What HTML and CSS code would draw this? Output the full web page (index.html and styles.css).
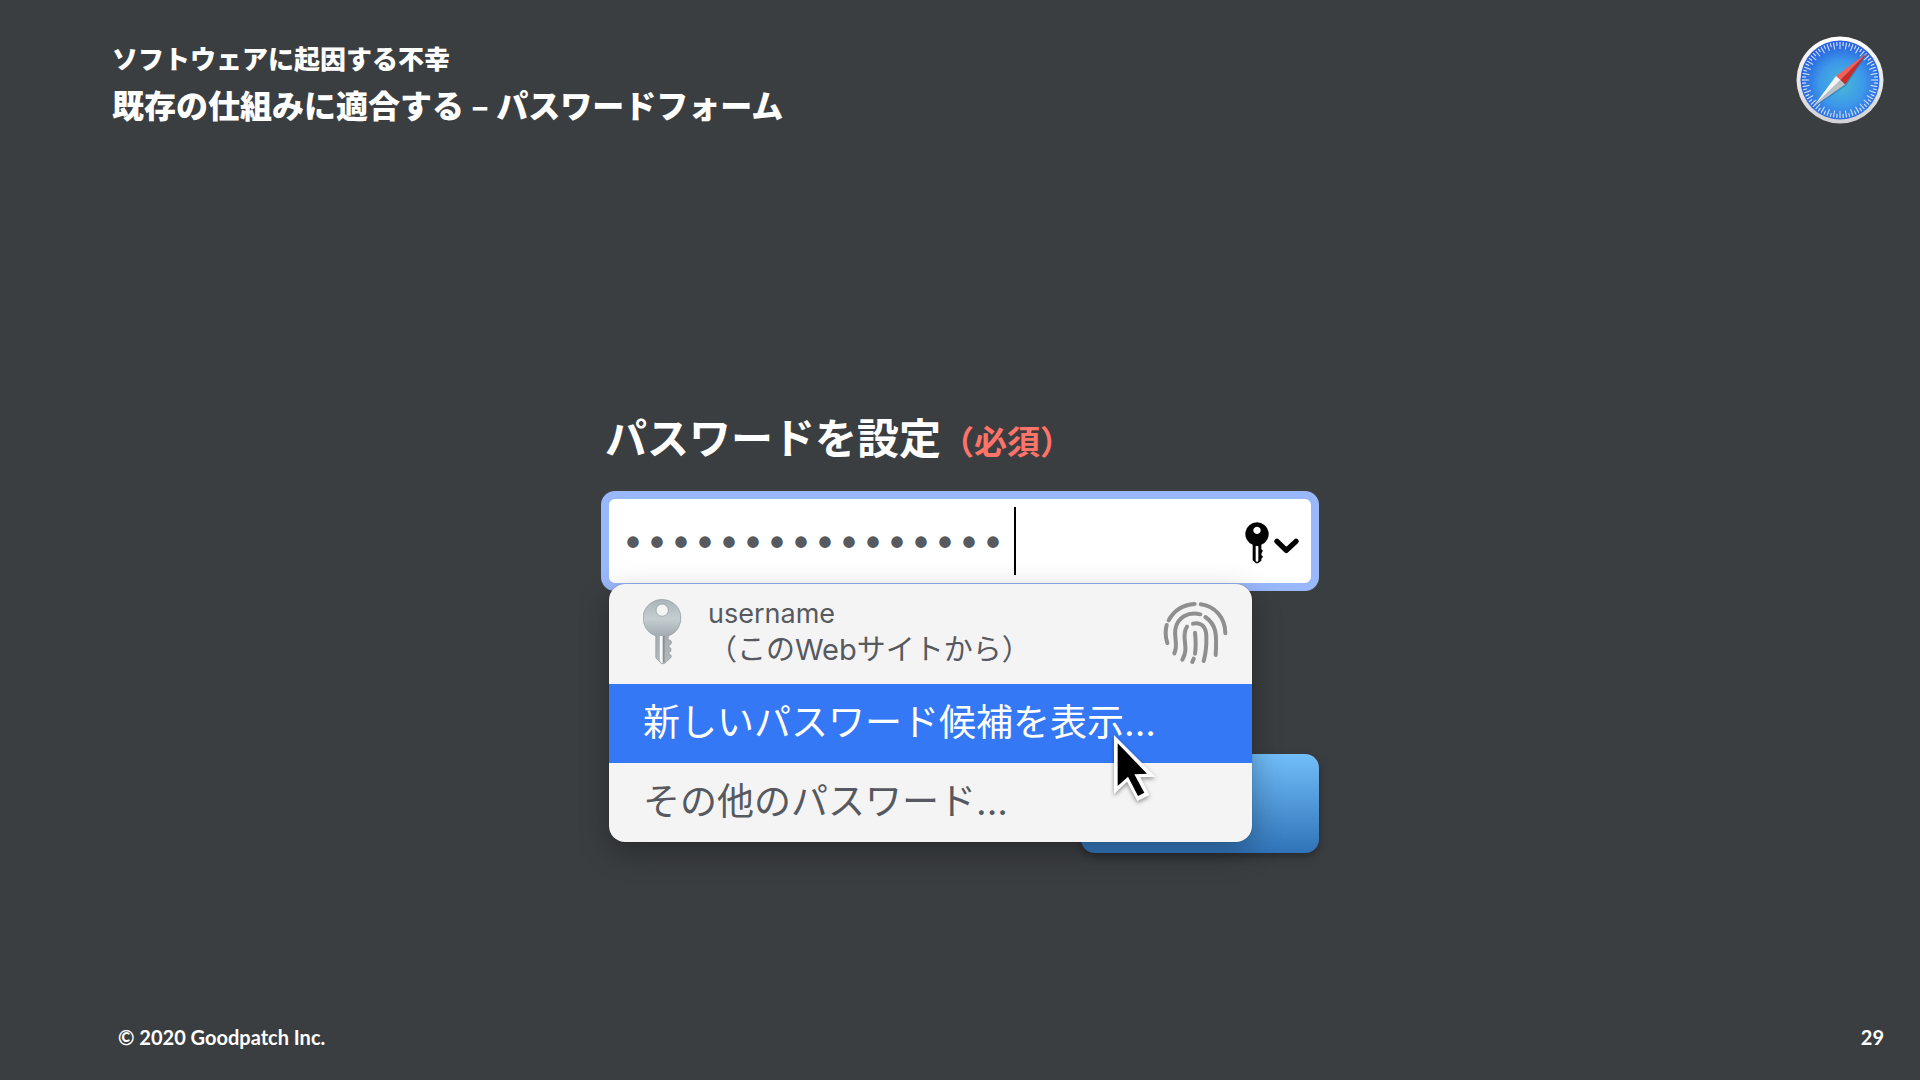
FILE: index.html
```
<!DOCTYPE html>
<html lang="ja">
<head>
    <meta charset="UTF-8">
    <meta name="viewport" content="width=device-width, initial-scale=1.0">
    <title>パスワードフォーム</title>
    <link rel="stylesheet" href="styles.css">
</head>
<body>
    <header class="header">
        <div class="titles">
            <p class="chapter">ソフトウェアに起因する不幸</p>
            <h1 class="title">既存の仕組みに適合する – パスワードフォーム</h1>
        </div>
        <svg class="logo" viewBox="0 0 88 88" aria-hidden="true">
            <defs>
                <linearGradient id="rim" x1="0" y1="0" x2="0" y2="1">
                    <stop offset="0" stop-color="#ffffff"/>
                    <stop offset="1" stop-color="#d2d2d4"/>
                </linearGradient>
                <radialGradient id="dial" cx="0.52" cy="0.55" r="0.52">
                    <stop offset="0" stop-color="#48b9d6"/>
                    <stop offset="0.55" stop-color="#3d98ea"/>
                    <stop offset="1" stop-color="#2760df"/>
                </radialGradient>
            </defs>
            <circle cx="44" cy="44" r="43.5" fill="url(#rim)"/>
            <circle cx="44" cy="44" r="39.5" fill="url(#dial)"/>
            <!-- compass ticks, long and short alternating -->
            <circle cx="44" cy="44" r="34.5" fill="none" stroke="#c5dcfa" stroke-width="7" pathLength="360" stroke-dasharray="2 8" stroke-dashoffset="1"/>
            <circle cx="44" cy="44" r="36" fill="none" stroke="#c5dcfa" stroke-width="4" pathLength="360" stroke-dasharray="2 8" stroke-dashoffset="-4"/>
            <path d="M17 72 L42 42 L71 18 L50 50 Z" fill="#112f66" opacity="0.25"/>
            <path d="M71 17 L40 40 L44.500 44 Z" fill="#f0625a"/>
            <path d="M71 17 L44.500 44 L49 48.500 Z" fill="#cd2b25"/>
            <path d="M17 71 L40 40 L44.500 44 Z" fill="#f5f5f5"/>
            <path d="M17 71 L44.500 44 L49 48.500 Z" fill="#bcc0c3"/>
        </svg>
    </header>

    <main class="main">
        <form class="form">
            <label class="label" for="password">パスワードを設定<span class="required">（必須）</span></label>

            <div class="field">
                <input class="password" id="password" type="password" value="passwordpassword" autocomplete="new-password">
                <span class="caret"></span>
                <button class="key-button" type="button" aria-label="パスワード" aria-expanded="true">
                    <svg class="key-icon" viewBox="74 66 162 126" aria-hidden="true">
                        <path fill-rule="evenodd" d="M110 67 a35 35 0 0 1 13 67.500 V148 L128 152 L124 158 L123 165 L128 170 L123 177 V182 L113 190 H107 L97 181 V134.500 A35 35 0 0 1 110 67 Z M110 80 a11 11 0 1 0 0.100 0 Z M106 138 V183 L110 186 L114 183 V138 Z"/>
                        <path d="M170 124 L198 151 L227 124" fill="none" stroke="#000" stroke-width="16" stroke-linecap="round" stroke-linejoin="round"/>
                    </svg>
                </button>

                <div class="menu">
                    <button class="item account" type="button">
                        <svg class="big-key" viewBox="72 28 116 196" aria-hidden="true">
                            <defs>
                                <linearGradient id="steel" x1="0" y1="0" x2="0" y2="1">
                                    <stop offset="0" stop-color="#aab5b9"/>
                                    <stop offset="0.3" stop-color="#c4ced1"/>
                                    <stop offset="0.55" stop-color="#a5afb3"/>
                                    <stop offset="1" stop-color="#b4b8ba"/>
                                </linearGradient>
                            </defs>
                            <path fill="url(#steel)" stroke="#8e989c" stroke-width="2" fill-rule="evenodd" d="M129 29 a56 56 0 0 1 18 109 V148 L156 153 V161 L148 168 L155 175 V183 L148 189 L156 196 V201 L136 220 H127 L110 203 V138 A56 56 0 0 1 129 29 Z M129 43 a18 18 0 1 0 0.100 0 Z"/>
                            <path d="M122 138 H130 V218 H127 L122 211 Z" fill="#f8fafa"/>
                            <path d="M132 138 H136 V216 H132 Z" fill="#84898c"/>
                        </svg>
                        <span class="account-text">
                            <span class="account-name">username</span>
                            <span class="account-source">（このWebサイトから）</span>
                        </span>
                        <svg class="fingerprint" viewBox="38 30 195 189" aria-hidden="true">
                            <path d="M55 88 Q79 43 133 39"/>
                            <path d="M151 40 C195 45 225 82 225 127"/>
                            <path d="M49 102 Q42 130 51 156"/>
                            <path d="M72 187 C84 160 71 146 75 115 C81 80 113 61 150 70"/>
                            <path d="M165 78 C198 100 200 130 196 192"/>
                            <path d="M96 206 C114 175 100 155 103 128 Q104 115 110 107"/>
                            <path d="M128 98 C150 92 167 105 168 135 C169 165 167 185 160 210"/>
                            <path d="M134 125 Q138 160 134 188"/>
                            <path d="M130 203 L126 213"/>
                        </svg>
                    </button>
                    <button class="item selected" type="button">新しいパスワード候補を表示...</button>
                    <button class="item" type="button">その他のパスワード...</button>
                    <svg class="cursor" viewBox="190 159 132 210" aria-hidden="true">
                        <path fill="#fff" d="M193 165 L318 290 L272 292 L299 345 L263 363 L232 305 L193 342 Z"/>
                        <path d="M204 190 L292 281 L254 283 L284 338 L265 348 L235 290 L204 318 Z"/>
                    </svg>
                </div>
            </div>

            <button class="submit" type="submit" aria-label="設定"></button>
        </form>
    </main>

    <footer class="footer">
        <small class="copyright">© 2020 Goodpatch Inc.</small>
        <span class="page-number">29</span>
    </footer>
</body>
</html>
```
FILE: styles.css
```
/* General */
* {
    box-sizing: border-box;
}

body {
    display: flex;
    flex-direction: column;
    min-height: 100vh;
    margin: 0;
    background: #3b3e41;
    color: #fff;
    font-family: "Noto Sans CJK JP", sans-serif;
}

button {
    margin: 0;
    padding: 0;
    border: none;
    background: none;
    cursor: pointer;
}

/* Header */
.header {
    display: flex;
    justify-content: space-between;
    align-items: flex-end;
    padding: 35px 36px 0 112px;
}

.chapter,
.title {
    margin: 0;
    font-weight: 900;
    line-height: 46px;
}

.chapter {
    font-size: 26px;
}

.title {
    font-size: 32px;
}

.logo {
    width: 88px;
    height: 88px;
    margin-bottom: 3px;
}

/* Form */
.main {
    flex: 1;
    padding-top: 279px;
}

.form {
    display: flex;
    flex-direction: column;
    width: 718px;
    max-width: 100%;
    margin: 0 auto;
}

.label {
    padding-left: 4px;
    font-size: 42px;
    font-weight: 700;
    line-height: 60px;
}

.required {
    color: #ff7369;
    font-size: 33px;
    line-height: 1;
}

.field {
    position: relative;
    display: flex;
    align-items: center;
    height: 100px;
    margin-top: 25px;
    border: 8px solid #99b8fb;
    border-radius: 14px;
    background: #fff;
}

.password {
    width: 405px;
    height: 68px;
    padding: 8px 0 0 12px;
    border: none;
    outline: none;
    background: transparent;
    color: #565960;
    font-family: "Liberation Mono", monospace;
    font-size: 40px;
    font-weight: 700;
}

.caret {
    width: 2px;
    height: 68px;
    background: #000;
}

.key-button {
    margin: 0 12px 0 auto;
    padding-top: 4px;
}

.key-icon {
    display: block;
    width: 54px;
    height: 42px;
}

/* Suggestion menu */
.menu {
    position: absolute;
    top: 85px;
    left: 0;
    width: 643px;
    overflow: visible;
    border-radius: 16px;
    background: #f4f4f4;
    box-shadow: 0 0 1px rgba(0, 0, 0, 0.5), 0 10px 30px rgba(0, 0, 0, 0.3);
}

.item {
    display: block;
    width: 100%;
    height: 79px;
    padding: 0 34px 8px;
    color: #565960;
    font-family: Inter, "Noto Sans CJK JP", sans-serif;
    font-size: 37px;
    text-align: left;
}

.account {
    display: flex;
    align-items: center;
    height: 100px;
    padding: 0 24px 4px 34px;
    line-height: 36px;
}

.account-text {
    display: flex;
    flex-direction: column;
    margin-left: 26px;
}

.account-name {
    font-size: 27px;
}

.account-source {
    font-size: 29px;
}

.big-key {
    width: 39px;
    height: 66px;
}

.fingerprint {
    width: 65px;
    height: 63px;
    margin-left: auto;
    fill: none;
    stroke: #8f8f8f;
    stroke-width: 12;
    stroke-linecap: round;
}

.selected {
    background: #3478f6;
    color: #fff;
}

.cursor {
    position: absolute;
    top: 149px;
    left: 504px;
    width: 44px;
    height: 70px;
    filter: drop-shadow(0 2px 2px rgba(0, 0, 0, 0.4));
}

.submit {
    align-self: flex-end;
    width: 238px;
    height: 99px;
    margin-top: 163px;
    border-radius: 14px;
    background: linear-gradient(#71bef9, #3073b8);
    box-shadow: 0 4px 8px rgba(0, 0, 0, 0.3);
}

/* Footer */
.footer {
    display: flex;
    justify-content: space-between;
    align-items: center;
    padding: 0 36px 28px 118px;
    font-family: Lato, sans-serif;
    font-size: 20px;
    font-weight: 700;
    line-height: 30px;
}

.copyright {
    font-size: 20px;
}
```
